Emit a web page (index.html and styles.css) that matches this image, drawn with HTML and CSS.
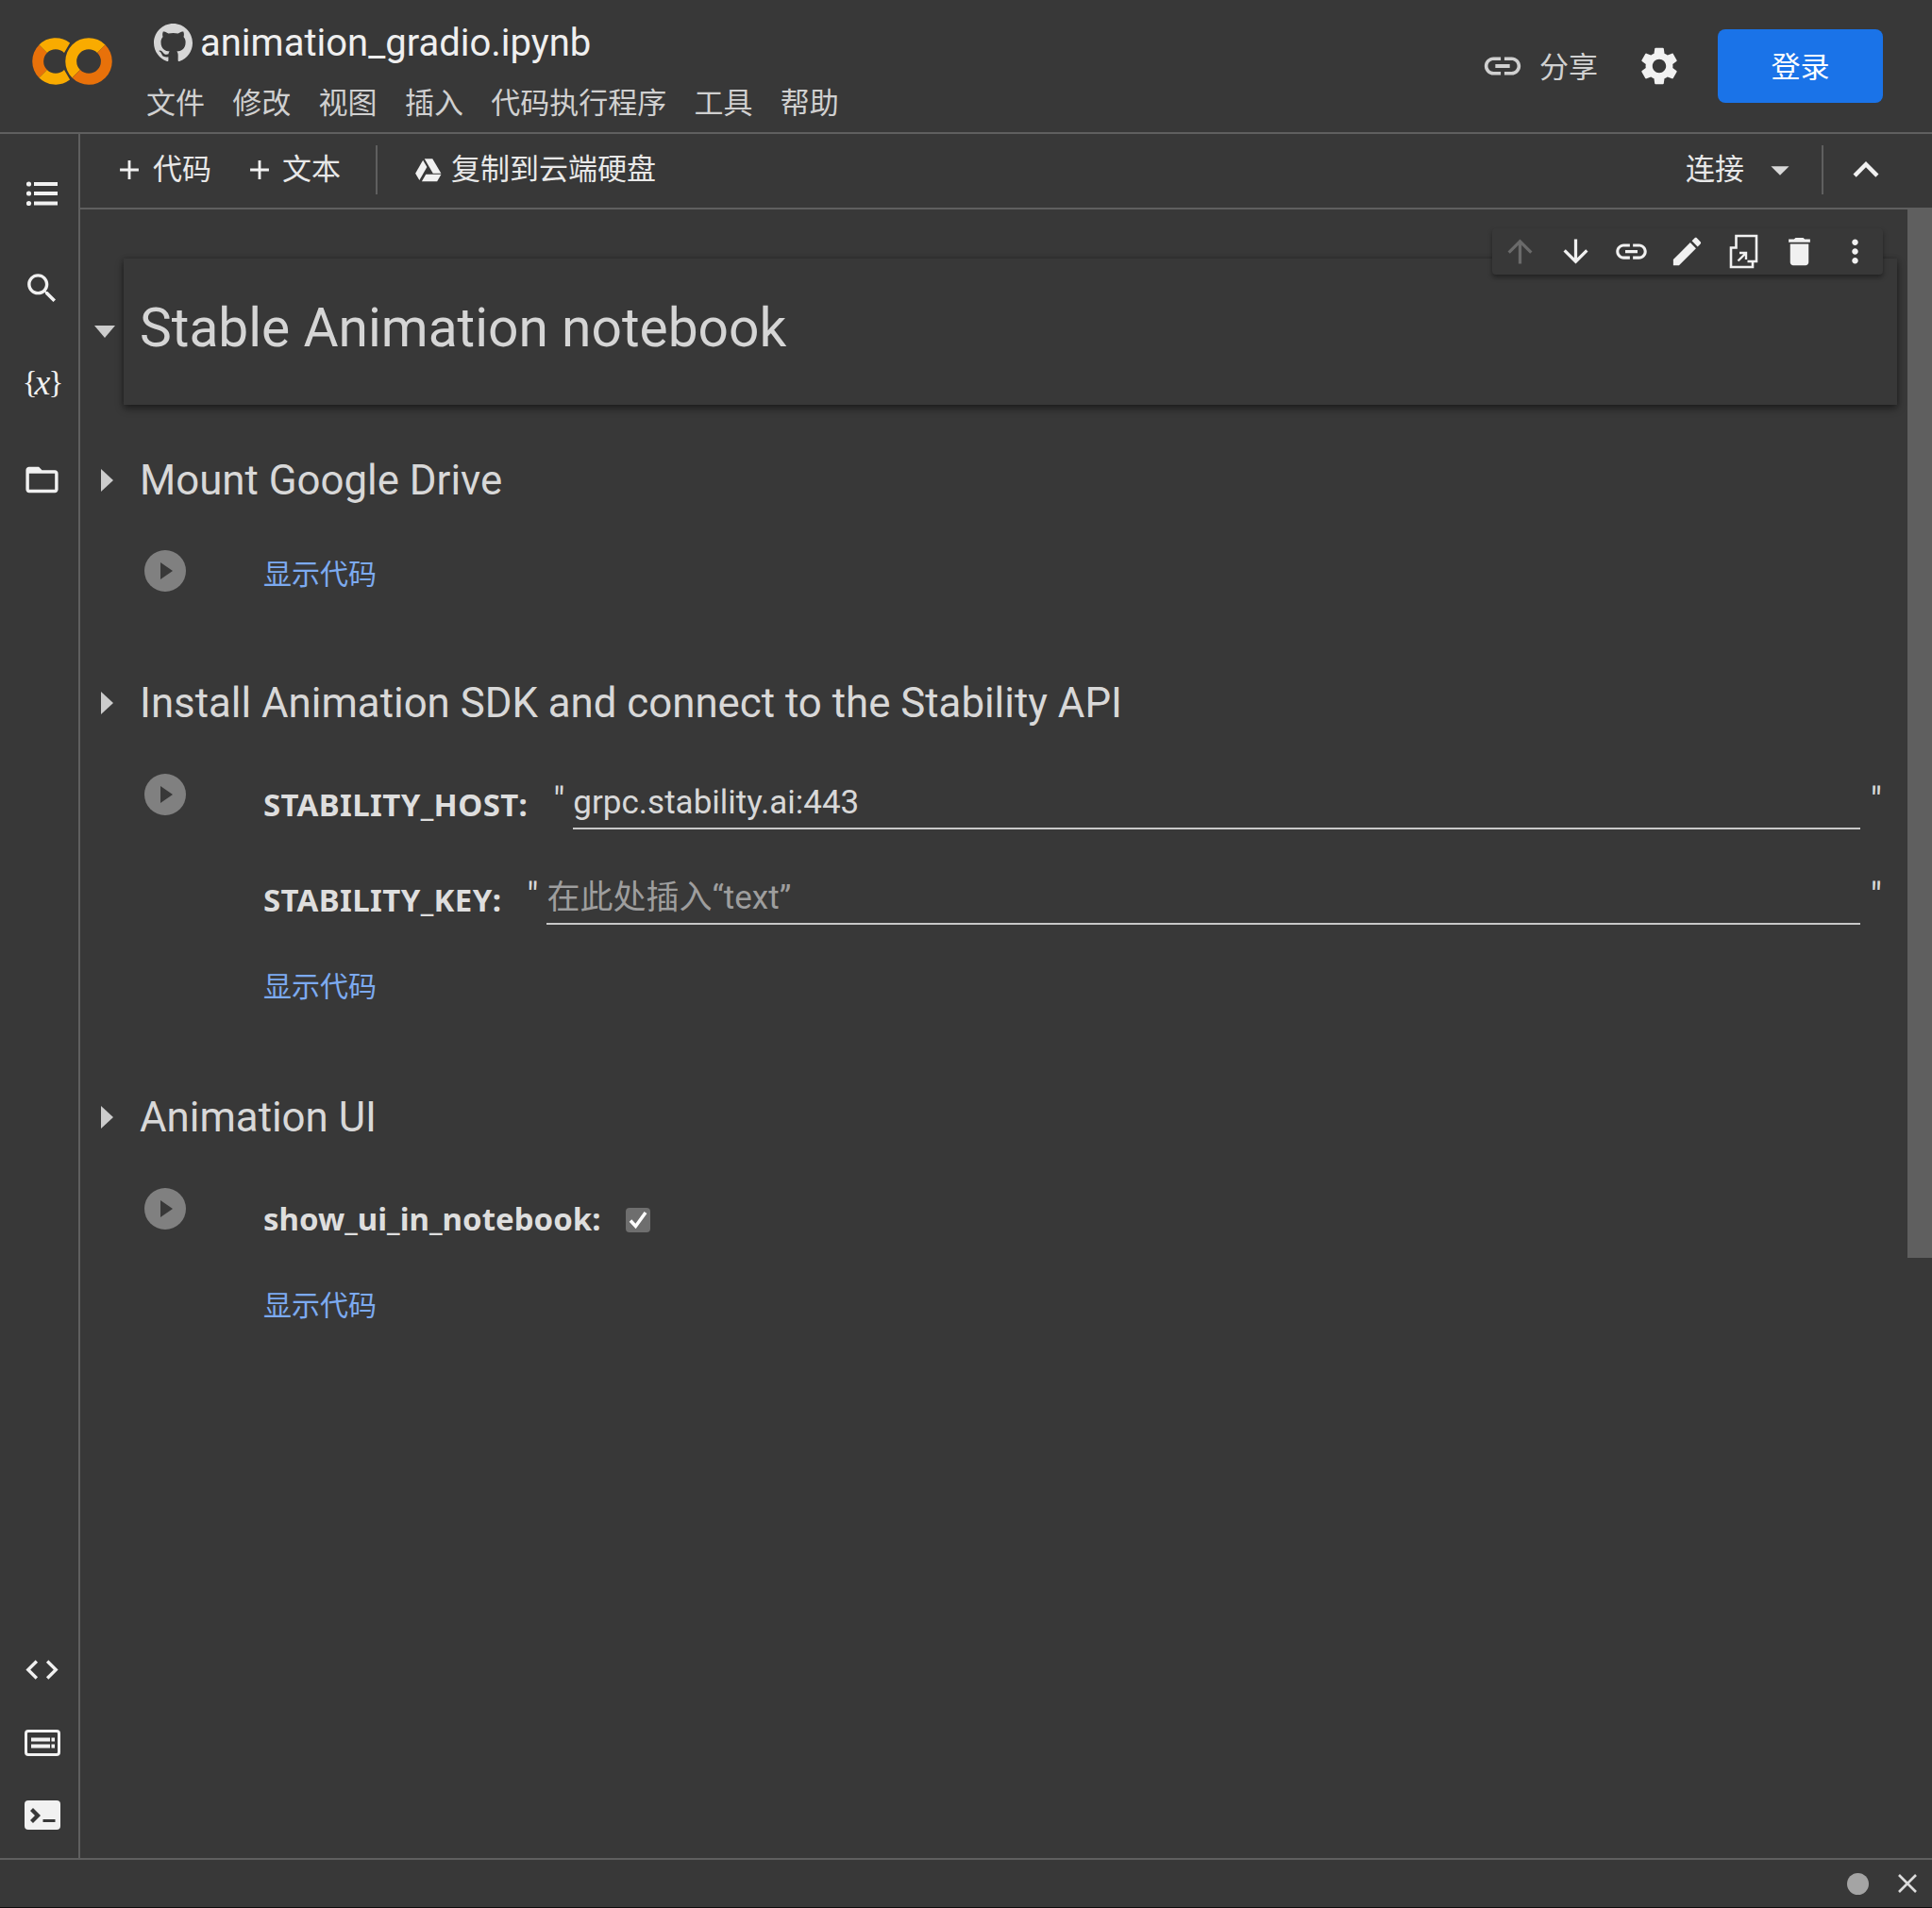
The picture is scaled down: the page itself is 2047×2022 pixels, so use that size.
FILE: index.html
```html
<!DOCTYPE html>
<html lang="zh-CN">
<head>
<meta charset="utf-8">
<title>animation_gradio.ipynb</title>
<link rel="stylesheet" href="styles.css">
</head>
<body>
<div class="app">
  <header class="header">
    <svg class="logo" viewBox="0 5 24 14">
      <path d="M4.54,9.46,2.19,7.1a6.93,6.93,0,0,0,0,9.79l2.36-2.36A3.59,3.59,0,0,1,4.54,9.46Z" fill="#E8710A"/>
      <path d="M2.19,7.1,4.54,9.46a3.59,3.59,0,0,1,5.08,0l1.71-2.93h0l-.1-.08h0A6.93,6.93,0,0,0,2.19,7.1Z" fill="#F9AB00"/>
      <path d="M11.34,17.46h0L9.62,14.54a3.59,3.59,0,0,1-5.08,0L2.19,16.9a6.93,6.93,0,0,0,9,.65l.11-.09" fill="#F9AB00"/>
      <path d="M12,7.1a6.93,6.93,0,0,0,0,9.79l2.36-2.36a3.59,3.59,0,1,1,5.08-5.08L21.81,7.1A6.93,6.93,0,0,0,12,7.1Z" fill="#F9AB00"/>
      <path d="M21.81,7.1,19.46,9.46a3.59,3.59,0,0,1-5.08,5.08L12,16.9A6.93,6.93,0,0,0,21.81,7.1Z" fill="#E8710A"/>
    </svg>
    <div class="doc">
      <div class="doc-title">
        <svg class="github" viewBox="0 0 16 16"><path d="M8 0C3.58 0 0 3.58 0 8c0 3.54 2.29 6.53 5.47 7.59.4.07.55-.17.55-.38 0-.19-.01-.82-.01-1.49-2.01.37-2.53-.49-2.69-.94-.09-.23-.48-.94-.82-1.13-.28-.15-.68-.52-.01-.53.63-.01 1.08.58 1.23.82.72 1.21 1.87.87 2.33.66.07-.52.28-.87.51-1.07-1.78-.2-3.64-.89-3.64-3.95 0-.87.31-1.59.82-2.15-.08-.2-.36-1.02.08-2.12 0 0 .67-.21 2.2.82.64-.18 1.32-.27 2-.27.68 0 1.36.09 2 .27 1.53-1.04 2.2-.82 2.2-.82.44 1.1.16 1.92.08 2.12.51.56.82 1.27.82 2.15 0 3.07-1.87 3.75-3.65 3.95.29.25.54.73.54 1.48 0 1.07-.01 1.93-.01 2.2 0 .21.15.46.55.38A8.013 8.013 0 0016 8c0-4.42-3.58-8-8-8z"/></svg>
        <span>animation_gradio.ipynb</span>
      </div>
      <nav class="menu">
        <span>文件</span><span>修改</span><span>视图</span><span>插入</span><span>代码执行程序</span><span>工具</span><span>帮助</span>
      </nav>
    </div>
    <div class="header-right">
      <svg class="share-icon" viewBox="0 0 24 24"><path d="M3.9 12c0-1.71 1.39-3.1 3.1-3.1h4V7H7c-2.76 0-5 2.24-5 5s2.24 5 5 5h4v-1.9H7c-1.71 0-3.1-1.39-3.1-3.1zM8 13h8v-2H8v2zm9-6h-4v1.9h4c1.71 0 3.1 1.39 3.1 3.1s-1.39 3.1-3.1 3.1h-4V17h4c2.76 0 5-2.24 5-5s-2.24-5-5-5z"/></svg>
      <span class="share">分享</span>
      <svg class="gear" viewBox="0 0 24 24"><path d="M19.14 12.94c.04-.3.06-.61.06-.94 0-.32-.02-.64-.07-.94l2.03-1.58c.18-.14.23-.41.12-.61l-1.92-3.32c-.12-.22-.37-.29-.59-.22l-2.39.96c-.5-.38-1.03-.7-1.62-.94l-.36-2.54c-.04-.24-.24-.41-.48-.41h-3.84c-.24 0-.43.17-.47.41l-.36 2.54c-.59.24-1.13.57-1.62.94l-2.39-.96c-.22-.08-.47 0-.59.22L2.74 8.87c-.12.21-.08.47.12.61l2.03 1.58c-.05.3-.09.63-.09.94s.02.64.07.94l-2.03 1.58c-.18.14-.23.41-.12.61l1.92 3.32c.12.22.37.29.59.22l2.39-.96c.5.38 1.03.7 1.62.94l.36 2.54c.05.24.24.41.48.41h3.84c.24 0 .44-.17.47-.41l.36-2.54c.59-.24 1.13-.56 1.62-.94l2.39.96c.22.08.47 0 .59-.22l1.92-3.32c.12-.22.07-.47-.12-.61l-2.01-1.58zM12 15.6c-1.98 0-3.6-1.62-3.6-3.6s1.62-3.6 3.6-3.6 3.6 1.62 3.6 3.6-1.62 3.6-3.6 3.6z"/></svg>
      <button class="signin">登录</button>
    </div>
  </header>

  <div class="body-row">
    <aside class="sidebar">
      <div class="side-top">
        <div class="side-slot">
          <svg class="side-list" viewBox="0 0 33 26"><circle cx="2.5" cy="3" r="2.6"/><circle cx="2.5" cy="13" r="2.6"/><circle cx="2.5" cy="23.5" r="2.6"/><rect x="8" y="1" width="25" height="4"/><rect x="8" y="11" width="25" height="4"/><rect x="8" y="21.500" width="25" height="4"/></svg>
        </div>
        <div class="side-slot">
          <svg class="side-icon" viewBox="0 0 24 24"><path d="M15.5 14h-.79l-.28-.27C15.41 12.59 16 11.11 16 9.5 16 5.91 13.09 3 9.5 3S3 5.91 3 9.5 5.91 16 9.5 16c1.61 0 3.09-.59 4.23-1.57l.27.28v.79l5 4.99L20.49 19l-4.99-5zm-6 0C7.01 14 5 11.99 5 9.500S7.01 5 9.5 5 14 7.01 14 9.5 11.99 14 9.5 14z"/></svg>
        </div>
        <div class="side-slot vars">{<i>x</i>}</div>
        <div class="side-slot side-folder">
          <svg class="side-icon" viewBox="0 0 24 24"><path d="M20 6h-8l-2-2H4c-1.1 0-1.99.9-1.99 2L2 18c0 1.1.9 2 2 2h16c1.1 0 2-.9 2-2V8c0-1.1-.9-2-2-2zm0 12H4V8h16v10z"/></svg>
        </div>
      </div>
      <div class="side-bottom">
        <div class="side-slot short">
          <svg class="side-icon" viewBox="0 0 24 24"><path d="M9.4 16.6L4.8 12l4.6-4.6L8 6l-6 6 6 6 1.4-1.400zm5.2 0l4.6-4.6-4.6-4.6L16 6l6 6-6 6-1.4-1.400z"/></svg>
        </div>
        <div class="side-slot short">
          <svg class="side-palette" viewBox="0 0 38 28"><rect x="1.500" y="1.500" width="35" height="25" rx="2.500" fill="none" stroke="#f1f1f1" stroke-width="3"/><rect x="7" y="8.500" width="20" height="4"/><rect x="7" y="15.500" width="20" height="4"/><rect x="28.500" y="8.500" width="3.500" height="4"/><rect x="28.500" y="15.500" width="3.500" height="4"/></svg>
        </div>
        <div class="side-slot short">
          <svg class="side-term" viewBox="0 0 38 31"><rect width="38" height="31" rx="4" fill="#f1f1f1"/><path d="M6 11l3-3 8 8-8 8-3-3 5-5z" fill="#383838"/><rect x="19.500" y="20" width="13" height="3" fill="#383838"/></svg>
        </div>
      </div>
    </aside>

    <div class="main">
      <div class="toolbar">
        <svg class="add" viewBox="0 0 24 24"><path d="M19 13h-6v6h-2v-6H5v-2h6V5h2v6h6v2z"/></svg>
        <span class="tool-label">代码</span>
        <svg class="add second" viewBox="0 0 24 24"><path d="M19 13h-6v6h-2v-6H5v-2h6V5h2v6h6v2z"/></svg>
        <span class="tool-label tight">文本</span>
        <span class="divider"></span>
        <svg class="drive" viewBox="0 0 24 24"><path d="M8.600 2.500h6.800l7.300 12.500h-6.900z"/><path d="M7.300 3.700l3.400 5.900L4.300 20.800.9 14.900z"/><path d="M9.800 15.700h13l-3.500 6H6.300z"/></svg>
        <span class="tool-label copy-label">复制到云端硬盘</span>
        <span class="tool-label connect">连接</span>
        <svg class="caret-icon" viewBox="0 0 24 24"><path d="M7 10l5 5 5-5z"/></svg>
        <span class="divider right"></span>
        <svg class="chevron" viewBox="0 0 24 24"><path d="M12 8l-6 6 1.410 1.410L12 10.830l4.590 4.580L18 14z"/></svg>
      </div>

      <div class="workspace">
        <main class="notebook">
          <div class="cell-tools">
            <svg class="cell-icon dim" viewBox="0 0 24 24"><path d="M4 12l1.410 1.410L11 7.830V20h2V7.830l5.580 5.590L20 12l-8-8-8 8z"/></svg>
            <svg class="cell-icon" viewBox="0 0 24 24"><path d="M20 12l-1.410-1.410L13 16.170V4h-2v12.170l-5.580-5.590L4 12l8 8 8-8z"/></svg>
            <svg class="cell-icon" viewBox="0 0 24 24"><path d="M3.900 12c0-1.710 1.390-3.100 3.100-3.100h4V7H7c-2.760 0-5 2.240-5 5s2.240 5 5 5h4v-1.900H7c-1.710 0-3.100-1.390-3.100-3.100zM8 13h8v-2H8v2zm9-6h-4v1.900h4c1.710 0 3.100 1.390 3.100 3.100s-1.390 3.100-3.100 3.100h-4V17h4c2.760 0 5-2.240 5-5s-2.240-5-5-5z"/></svg>
            <svg class="cell-icon" viewBox="0 0 24 24"><path d="M3 17.250V21h3.750L17.810 9.940l-3.750-3.750L3 17.250zM20.710 7.040c.39-.39.39-1.020 0-1.410l-2.340-2.340c-.39-.39-1.020-.39-1.410 0l-1.830 1.830 3.750 3.750 1.830-1.830z"/></svg>
            <svg class="cell-icon" viewBox="-4.500 -1.500 39 39"><path d="M19 28.500h9.500v-27H7V14H1.500v20.500h23v-6" fill="none" stroke="#f1f1f1" stroke-width="2.600"/><path d="M9 28l8-8M10.500 19.500h7v7" fill="none" stroke="#f1f1f1" stroke-width="2.400"/></svg>
            <svg class="cell-icon" viewBox="0 0 24 24"><path d="M6 19c0 1.100.9 2 2 2h8c1.100 0 2-.9 2-2V7H6v12zM19 4h-3.500l-1-1h-5l-1 1H5v2h14V4z"/></svg>
            <svg class="cell-icon" viewBox="0 0 24 24"><path d="M12 8c1.100 0 2-.9 2-2s-.9-2-2-2-2 .9-2 2 .9 2 2 2zm0 2c-1.100 0-2 .9-2 2s.9 2 2 2 2-.9 2-2-.9-2-2-2zm0 6c-1.100 0-2 .9-2 2s.9 2 2 2 2-.9 2-2-.9-2-2-2z"/></svg>
          </div>

          <section class="title-row">
            <div class="caret-down"></div>
            <div class="title-cell"><h1>Stable Animation notebook</h1></div>
          </section>

          <section class="section first">
            <div class="heading-row"><div class="caret-right"></div><h2>Mount Google Drive</h2></div>
            <div class="code-cell">
              <div class="play"></div>
              <div class="form"><a class="show-code only">显示代码</a></div>
            </div>
          </section>

          <section class="section">
            <div class="heading-row"><div class="caret-right"></div><h2>Install Animation SDK and connect to the Stability API</h2></div>
            <div class="code-cell">
              <div class="play"></div>
              <div class="form">
                <div class="form-row">
                  <label class="label upper">STABILITY_HOST:</label>
                  <span class="quote">"</span>
                  <div class="field">grpc.stability.ai:443</div>
                  <span class="quote end">"</span>
                </div>
                <div class="form-row key">
                  <label class="label upper">STABILITY_KEY:</label>
                  <span class="quote">"</span>
                  <div class="field placeholder">在此处插入“text”</div>
                  <span class="quote end">"</span>
                </div>
                <a class="show-code">显示代码</a>
              </div>
            </div>
          </section>

          <section class="section last">
            <div class="heading-row"><div class="caret-right"></div><h2>Animation UI</h2></div>
            <div class="code-cell">
              <div class="play"></div>
              <div class="form">
                <div class="form-row">
                  <label class="label">show_ui_in_notebook:</label>
                  <span class="checkbox"><svg viewBox="0 0 26 26"><path d="M5 13.500l5.500 6L21 5" fill="none" stroke="#fff" stroke-width="3.500"/></svg></span>
                </div>
                <a class="show-code">显示代码</a>
              </div>
            </div>
          </section>
        </main>
        <div class="scrollbar"><div class="thumb"></div></div>
      </div>
    </div>
  </div>

  <footer class="status">
    <span class="dot"></span>
    <svg class="close" viewBox="0 0 20 20"><path d="M1 1l18 18M19 1L1 19" stroke="#dcdcdc" stroke-width="2.600" fill="none"/></svg>
  </footer>
</div>
</body>
</html>
```

FILE: styles.css
```css
* { box-sizing: border-box; }
html, body { margin: 0; padding: 0; background: #0c0c0c; }
body {
  font-family: Roboto, "Noto Sans CJK SC", sans-serif;
  color: #d8d8d8;
}
svg { display: block; flex: none; fill: #f1f1f1; }
h1, h2 { margin: 0; font-weight: 400; }

.app {
  width: 2047px;
  height: 2021px;
  background: #383838;
  display: flex;
  flex-direction: column;
  overflow: hidden;
}

/* Header */
.header {
  height: 142px;
  flex: none;
  display: flex;
  border-bottom: 2px solid #5f5f5f;
}
.logo { width: 87px; height: 50px; margin: 40px 0 0 33px; }
.doc { margin-left: 35px; display: flex; flex-direction: column; }
.doc-title {
  height: 54px;
  margin-top: 18px;
  display: flex;
  align-items: center;
  gap: 8px;
  padding-left: 8px;
  font-size: 40px;
  color: #efefef;
}
.github { width: 41px; height: 41px; fill: #d6d6d6; }
.menu {
  height: 44px;
  margin-top: 16px;
  display: flex;
  align-items: center;
  gap: 29.300px;
  font-size: 31px;
  line-height: 44px;
  color: #d0d0d0;
}
.header-right {
  margin-left: auto;
  display: flex;
  align-items: center;
  padding-right: 52px;
}
.share-icon { width: 46px; height: 46px; fill: #d0d0d0; }
.share { margin: 0 0 4px 16px; font-size: 31px; color: #d0d0d0; }
.gear { width: 48px; height: 48px; margin-left: 41px; }
.signin {
  width: 175px;
  height: 78px;
  margin-left: 38px;
  padding: 0 0 4px;
  border: 0;
  border-radius: 8px;
  background: #1a73e8;
  color: #fff;
  font: 400 31px Roboto, "Noto Sans CJK SC", sans-serif;
}

/* Sidebar */
.body-row { flex: 1; display: flex; min-height: 0; }
.sidebar {
  width: 85px;
  flex: none;
  border-right: 2px solid #5f5f5f;
  display: flex;
  flex-direction: column;
  justify-content: space-between;
  padding: 13px 0 7px 6px;
}
.side-slot {
  height: 100px;
  display: flex;
  align-items: center;
  justify-content: center;
}
.side-slot.short { height: 77px; }
.side-folder { margin-top: 3px; }
.side-icon { width: 41px; height: 41px; }
.side-list { width: 33px; height: 26px; }
.side-palette { width: 38px; height: 28px; }
.side-term { width: 38px; height: 31px; }
.vars {
  font-family: "Liberation Serif", serif;
  font-size: 33px;
  letter-spacing: -2px;
  color: #f1f1f1;
}
.vars i { font-size: 38px; margin-left: -1px; }

/* Toolbar */
.main { flex: 1; min-width: 0; display: flex; flex-direction: column; }
.toolbar {
  height: 80px;
  flex: none;
  display: flex;
  align-items: center;
  padding: 0 43px 2px 35px;
  border-bottom: 2px solid #5f5f5f;
  font-size: 31px;
  color: #e8e8e8;
}
.add { width: 34px; height: 34px; }
.add.second { margin-left: 34px; }
.tool-label { margin: 0 0 8px 8px; }
.tool-label.tight { margin-left: 7px; }
.divider { width: 2px; height: 52px; background: #5f5f5f; margin-left: 37px; }
.divider.right { margin-left: 21px; }
.drive { width: 30px; height: 30px; margin-left: 39px; }
.tool-label.copy-label { margin-left: 9px; }
.tool-label.connect { margin-left: auto; }
.caret-icon { width: 46px; height: 46px; margin-left: 15px; fill: #d8d8d8; }
.chevron { width: 54px; height: 54px; margin-left: 18px; }

/* Notebook */
.workspace { flex: 1; display: flex; min-height: 0; }
.notebook { flex: 1; min-width: 0; position: relative; padding-top: 52px; }
.scrollbar { width: 26px; flex: none; }
.thumb { height: 1111px; background: #5f5f5f; }

.cell-tools {
  position: absolute;
  top: 20px;
  right: 26px;
  width: 414px;
  height: 49px;
  padding: 0 10px;
  display: flex;
  align-items: center;
  justify-content: space-between;
  background: #383838;
  border-radius: 4px;
  box-shadow: 0 3px 5px rgba(0, 0, 0, .4);
}
.cell-icon { width: 39px; height: 39px; }
.cell-icon.dim { fill: #6a6a6a; }

.title-row { display: flex; align-items: center; }
.caret-down {
  width: 0; height: 0;
  margin: 0 9px 0 15px;
  border-left: 11.5px solid transparent;
  border-right: 11.5px solid transparent;
  border-top: 13px solid #cccccc;
}
.title-cell {
  width: 1879px;
  height: 155px;
  padding: 0 0 8px 17px;
  display: flex;
  align-items: center;
  background: #383838;
  box-shadow: 0 4px 8px rgba(0, 0, 0, .45), 0 0 5px rgba(0, 0, 0, .2);
}
h1 { font-size: 56.900px; color: #d5d5d5; }

.section { margin-top: 86px; }
.section.first { margin-top: 50px; }
.section.last { margin-top: 88px; }
.heading-row { height: 60px; display: flex; align-items: center; }
.caret-right {
  width: 0; height: 0;
  margin: 0 28px 0 22px;
  border-top: 12px solid transparent;
  border-bottom: 12px solid transparent;
  border-left: 13px solid #cccccc;
}
h2 { font-size: 43.800px; color: #d8d8d8; }

.code-cell { display: flex; margin-top: 45px; }
.section.first .code-cell { margin-top: 44px; }
.play {
  width: 44px;
  height: 44px;
  flex: none;
  margin: 0 82px 0 68px;
  border-radius: 50%;
  background: #808080;
  position: relative;
}
.play::after {
  content: "";
  position: absolute;
  left: 17px;
  top: 13px;
  border-top: 9px solid transparent;
  border-bottom: 9px solid transparent;
  border-left: 13px solid #383838;
}
.form { flex: 1; min-width: 0; padding-right: 27px; }
.form-row { height: 64px; display: flex; align-items: center; }
.form-row.key { margin-top: 37px; }
.label {
  font-family: "Noto Sans", sans-serif;
  font-weight: 700;
  font-size: 33px;
  color: #dedede;
}
.label.upper { letter-spacing: .35px; }
.quote {
  align-self: flex-start;
  margin: 9px 9px 0 27px;
  font-size: 38px;
  line-height: 40px;
  color: #d8d8d8;
}
.quote.end { margin: 9px 0 0 11px; }
.field {
  flex: 1;
  min-width: 0;
  align-self: flex-start;
  height: 56px;
  margin-top: 3px;
  line-height: 56px;
  font-size: 35px;
  border-bottom: 2px solid #c8c8c8;
  color: #d8d8d8;
}
.field.placeholder { color: #9e9e9e; }
.checkbox {
  width: 26px;
  height: 26px;
  margin: 4px 0 0 26px;
  border-radius: 4px;
  background: #6e6e6e;
}
.show-code {
  display: block;
  height: 40px;
  line-height: 40px;
  margin-top: 41px;
  font-size: 30px;
  color: #7caaf0;
}
.show-code.only { margin-top: 6px; }

/* Status bar */
.status {
  height: 52px;
  flex: none;
  border-top: 2px solid #5f5f5f;
  display: flex;
  align-items: center;
  justify-content: flex-end;
  padding-right: 16px;
}
.dot { width: 23px; height: 23px; border-radius: 50%; background: #a4a4a4; }
.close { width: 20px; height: 20px; margin-left: 31px; }
```
